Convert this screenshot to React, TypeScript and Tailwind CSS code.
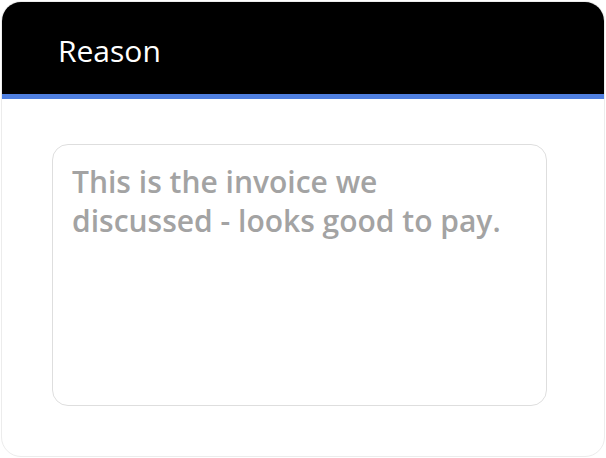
export default function App() {
  return (
    <div className="w-[606px] h-[458px] bg-white p-px font-['Open_Sans',sans-serif]">
      <div className="flex h-full flex-col overflow-hidden rounded-[20px] border border-[#ececec] bg-white">
        <div className="flex h-[92px] items-center bg-black pl-[56px] pt-[4px]">
          <h1 className="text-[30px] font-normal text-white">Reason</h1>
        </div>
        <div className="h-[5px] bg-[#4f7fe0]" />
        <div className="flex-1 pl-[50px] pr-[57px] pt-[45px] pb-[50px]">
          <textarea
            className="h-full w-full resize-none rounded-[16px] border border-[#dedede] pl-[19px] pr-[32px] pt-[17px] pb-[18px] text-[30px] font-semibold leading-[39px] text-[#a3a3a3] placeholder:text-[#a3a3a3] outline-none"
            placeholder="This is the invoice we discussed - looks good to pay."
          />
        </div>
      </div>
    </div>
  );
}
